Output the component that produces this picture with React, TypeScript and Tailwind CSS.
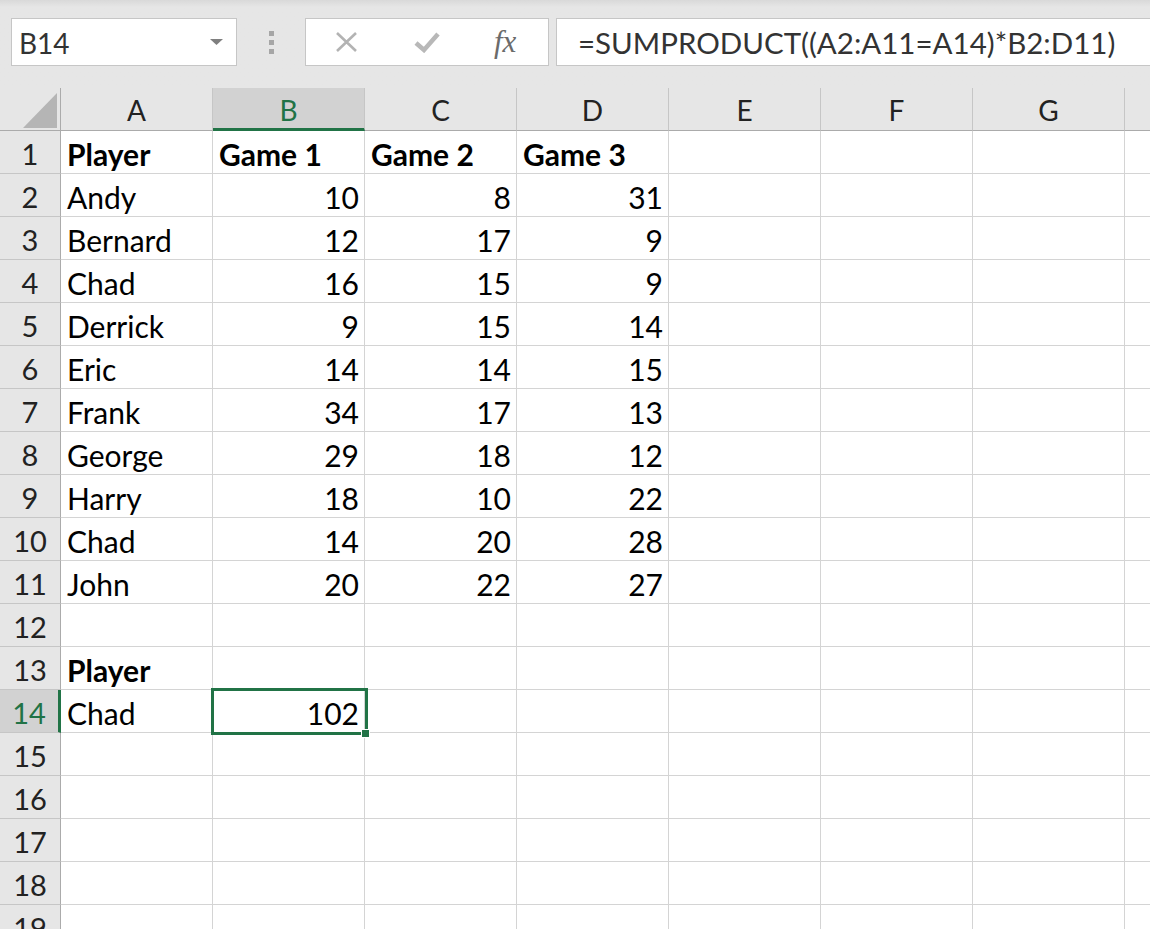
import React from 'react'

type Cell = string | number | null

// sheet data, one entry per row (row 1 and row 13 are bold)
const rows: Cell[][] = [
  ['Player', 'Game 1', 'Game 2', 'Game 3'],
  ['Andy', 10, 8, 31],
  ['Bernard', 12, 17, 9],
  ['Chad', 16, 15, 9],
  ['Derrick', 9, 15, 14],
  ['Eric', 14, 14, 15],
  ['Frank', 34, 17, 13],
  ['George', 29, 18, 12],
  ['Harry', 18, 10, 22],
  ['Chad', 14, 20, 28],
  ['John', 20, 22, 27],
  [],
  ['Player'],
  ['Chad', 102],
  [],
  [],
  [],
  [],
  [],
]

const boldRows = [1, 13]
const columns = ['A', 'B', 'C', 'D', 'E', 'F', 'G', '']
const font = { fontFamily: 'Lato, "Noto Sans", sans-serif' }

const Toolbar = () => (
  <div className="h-[88px] bg-gradient-to-b from-[#d9d9d9] via-[#e6e6e6] via-[8%] to-[#e6e6e6] pt-[18px] flex items-start">
    {/* name box */}
    <div className="ml-[11px] w-[226px] h-[48px] bg-white border border-[#c6c6c6] flex items-center justify-between pl-[7px] pr-[13px]">
      <span className="text-[28px] leading-[46px] text-[#333] pt-[2px]">B14</span>
      <svg width="13" height="6" viewBox="0 0 13 6">
        <polygon points="0,0 13,0 6.5,6" fill="#7f7f7f" />
      </svg>
    </div>

    {/* grip */}
    <div className="ml-[32px] mt-[13px] flex flex-col gap-[4px]">
      <div className="w-[5px] h-[5px] bg-[#a6a6a6]" />
      <div className="w-[5px] h-[5px] bg-[#a6a6a6]" />
      <div className="w-[5px] h-[5px] bg-[#a6a6a6]" />
    </div>

    {/* cancel / enter / fx */}
    <div className="ml-[31px] w-[244px] h-[48px] bg-white border border-[#c6c6c6] flex items-center">
      <svg className="ml-[29px]" width="23" height="20" viewBox="0 0 23 20">
        <path d="M2 1 L21 19 M21 1 L2 19" stroke="#b3b3b3" strokeWidth="2.6" fill="none" />
      </svg>
      <svg className="ml-[56px]" width="26" height="22" viewBox="0 0 26 22">
        <path d="M2 12 L10 19 L24 3" stroke="#b8b8b8" strokeWidth="4.5" fill="none" />
      </svg>
      <span
        className="ml-[54px] text-[31px] italic text-[#6b6b6b] leading-none -mt-[2px]"
        style={{ fontFamily: '"Liberation Serif", "DejaVu Serif", serif' }}
      >
        fx
      </span>
    </div>

    {/* formula input */}
    <div className="ml-[7px] flex-1 h-[48px] bg-white border border-r-0 border-[#c6c6c6] pl-[21px] flex items-center">
      <span className="text-[29.5px] leading-[46px] text-[#333] pt-[2px] whitespace-nowrap">
        =SUMPRODUCT((A2:A11=A14)*B2:D11)
      </span>
    </div>
  </div>
)

const HeaderRow = () => (
  <div className="flex h-[43px]">
    <div className="w-[61px] shrink-0 bg-[#e6e6e6] border-r border-b border-[#ababab] relative">
      <svg className="absolute left-0 top-0" width="61" height="43" viewBox="0 0 61 43">
        <polygon points="57,5 57,40 23,40" fill="#b5b5b5" />
      </svg>
    </div>
    {columns.map((c) => {
      const active = c === 'B'
      return (
        <div
          key={c || 'H'}
          className={`w-[152px] shrink-0 border-r border-[#c6c6c6] text-center text-[28px] leading-[45px] ${
            active
              ? 'bg-[#d2d2d2] text-[#217346] border-b-[3px] border-b-[#217346]'
              : 'bg-[#e6e6e6] text-[#222] border-b border-b-[#ababab]'
          }`}
        >
          {c}
        </div>
      )
    })}
  </div>
)

const SheetRow = ({ cells, n }: { cells: Cell[]; n: number }) => {
  const bold = boldRows.includes(n)
  const active = n === 14
  return (
    <div className="flex h-[43px]">
      <div
        className={`w-[61px] shrink-0 border-b border-[#c6c6c6] text-center text-[29px] leading-[46px] ${
          active
            ? 'bg-[#d2d2d2] text-[#217346] border-r-[3px] border-r-[#217346]'
            : 'bg-[#e6e6e6] text-[#222] border-r border-r-[#ababab]'
        }`}
      >
        {n}
      </div>
      {columns.map((c, i) => {
        const v = cells[i]
        const num = typeof v === 'number'
        return (
          <div
            key={c || 'H'}
            className={`w-[152px] shrink-0 border-r border-b border-[#d4d4d4] text-[30px] leading-[47px] text-black whitespace-nowrap ${
              num ? 'text-right pr-[5px]' : 'text-left pl-[6px]'
            } ${bold ? 'font-bold' : ''}`}
          >
            {v ?? ''}
          </div>
        )
      })}
    </div>
  )
}

export default function App() {
  return (
    <div className="w-[1150px] h-[929px] overflow-hidden bg-white" style={font}>
      <Toolbar />
      <div className="relative">
        <HeaderRow />
        {rows.map((cells, i) => (
          <SheetRow key={i} cells={cells} n={i + 1} />
        ))}
        {/* active cell B14 */}
        <div className="absolute left-[211px] top-[600px] w-[157px] h-[47px] border-[3px] border-[#217346]" />
        <div className="absolute left-[361px] top-[641px] w-[9px] h-[9px] bg-[#217346] border border-white" />
      </div>
    </div>
  )
}
